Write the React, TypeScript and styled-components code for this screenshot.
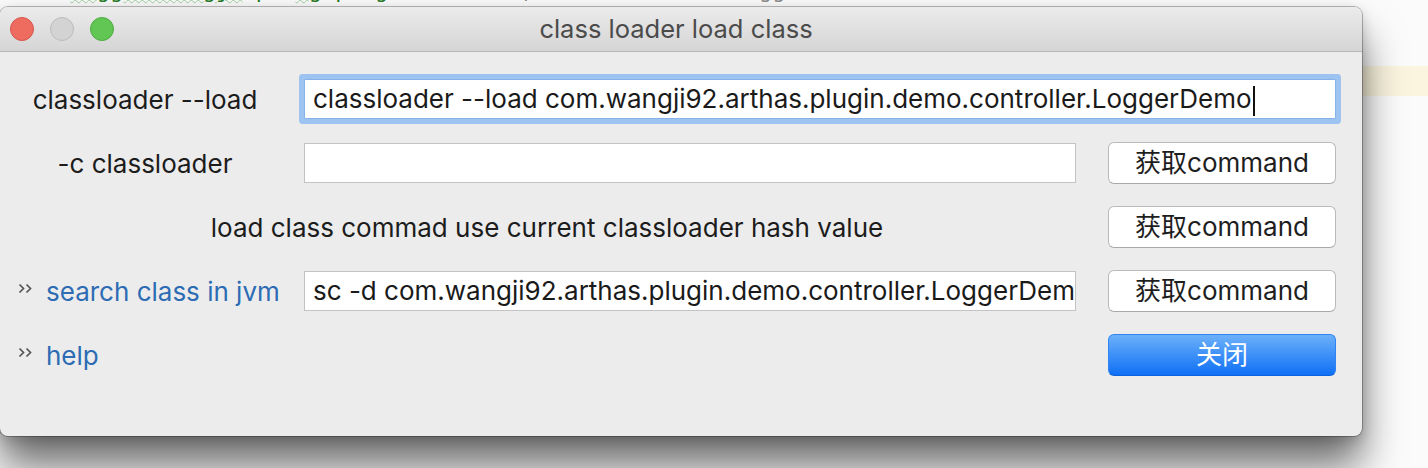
import React from 'react'
import styled, { createGlobalStyle, css } from 'styled-components'

const GlobalStyle = createGlobalStyle`
  html, body {
    margin: 0;
    padding: 0;
    background: #ffffff;
  }

  body {
    font-family: Inter, "Noto Sans CJK SC", sans-serif;
    -webkit-font-smoothing: antialiased;
  }
`

const Desktop = styled.div`
  position: relative;
  width: 1428px;
  height: 468px;
  overflow: hidden;
  background: #fbfbfb;
`

// the IDE editor that sits behind the dialog
const Editor = styled.div`
  margin-top: -24px;
  font-family: "DejaVu Sans Mono", monospace;
  font-size: 22px;
`

const CodeLine = styled.div<{ $current?: boolean }>`
  height: 30px;
  line-height: 30px;
  padding-left: 4px;
  white-space: pre;
  color: #8c8c8c;
  background: ${p => (p.$current ? '#fbf5df' : 'transparent')};
`

const Str = styled.span`
  color: #1f7a1f;
`

const Typo = styled.span`
  text-decoration: underline wavy #9fd09f;
  text-decoration-thickness: 1px;
`

const Window = styled.section`
  position: absolute;
  left: 0;
  top: 7px;
  width: 1362px;
  height: 429px;
  display: flex;
  flex-direction: column;
  overflow: hidden;
  background: #ececec;
  border-radius: 8px;
  box-shadow:
    0 0 0 1px rgba(0, 0, 0, 0.26),
    0 30px 40px rgba(0, 0, 0, 0.56),
    0 4px 14px rgba(0, 0, 0, 0.18);
`

const TitleBar = styled.header`
  height: 45px;
  box-sizing: border-box;
  display: grid;
  grid-template-columns: 1fr auto 1fr;
  align-items: center;
  background: linear-gradient(#ebebeb, #d5d5d5);
  border-bottom: 1px solid #b7b7b7;
`

const Lights = styled.div`
  display: flex;
  gap: 16px;
  padding-left: 10px;
`

const Light = styled.span<{ $fill: string; $edge: string }>`
  width: 24px;
  height: 24px;
  box-sizing: border-box;
  border-radius: 50%;
  background: ${p => p.$fill};
  border: 1px solid ${p => p.$edge};
`

const Title = styled.h1`
  margin: 0 10px 2px 0;
  font-size: 25.5px;
  font-weight: 400;
  color: #4b4b4b;
`

const Form = styled.div`
  display: grid;
  grid-template-columns: 270px 24px 772px 32px 228px;
  grid-auto-rows: 42px;
  row-gap: 22px;
  align-items: center;
  padding: 26px 26px 0 10px;
  font-size: 26px;
  color: #1c1c1c;
`

const FieldLabel = styled.label<{ $wide?: boolean }>`
  grid-column: ${p => (p.$wide ? '1 / 4' : '1')};
  padding-left: ${p => (p.$wide ? '8px' : '0')};
  text-align: center;
  white-space: nowrap;
`

const LinkLabel = styled.a`
  grid-column: 1;
  display: flex;
  align-items: center;
  gap: 13px;
  padding-left: 8px;
  color: #2d6cb4;
  text-decoration: none;
  white-space: nowrap;
`

const Chevrons = styled.svg`
  flex: none;
  margin-bottom: 5px;
`

const TextBox = styled.div<{ $wide?: boolean; $focused?: boolean }>`
  grid-column: ${p => (p.$wide ? '3 / 6' : '3')};
  height: 40px;
  box-sizing: border-box;
  padding: 0 8px;
  line-height: 37px;
  background: #ffffff;
  border: 1px solid #c3c3c3;
  white-space: nowrap;
  overflow: hidden;
  color: #1a1a1a;

  ${p =>
    p.$focused &&
    css`
      border-color: #86b2e8;
      border-radius: 1px;
      box-shadow: 0 0 0 5px #9dc4f1;
      overflow: visible;
    `}
`

const Caret = styled.span`
  display: inline-block;
  width: 2px;
  height: 30px;
  margin-left: 1px;
  vertical-align: middle;
  background: #111111;
`

const PushButton = styled.button<{ $primary?: boolean }>`
  grid-column: 5;
  height: 42px;
  padding: 0 0 1px;
  box-sizing: border-box;
  font-family: inherit;
  font-size: 26px;
  line-height: 1;
  color: #1e1e1e;
  background: #ffffff;
  border: 1px solid #bababa;
  border-bottom-color: #a9a9a9;
  border-radius: 6px;

  ${p =>
    p.$primary &&
    css`
      color: #ffffff;
      background: linear-gradient(#6cb0fa, #0f70f5);
      border-color: #2f83f2;
      border-bottom-color: #0c62dc;
    `}
`

const ChevronIcon = () => (
  <Chevrons width="15" height="11" viewBox="0 0 15 11">
    <path
      d="M1.5 1.5 L5.5 5.5 L1.5 9.5 M8.5 1.5 L12.5 5.5 L8.5 9.5"
      fill="none"
      stroke="#555555"
      strokeWidth="1.7"
    />
  </Chevrons>
)

export default function App() {
  return (
    <>
      <GlobalStyle />
      <Desktop>
        <Editor>
          <CodeLine>
            {'    '}
            <Str>
              "<Typo>lo</Typo>gg<Typo>er wangji</Typo> p l<Typo>u</Typo>g plugin"
            </Str>
            {' + name; // demo . . . loggerDemo . . . . .'}
          </CodeLine>
          <CodeLine />
          <CodeLine />
          <CodeLine $current />
        </Editor>

        <Window>
          <TitleBar>
            <Lights>
              <Light $fill="#ee6b60" $edge="#d5564b" />
              <Light $fill="#d3d3d3" $edge="#bcbcbc" />
              <Light $fill="#62c655" $edge="#4fab42" />
            </Lights>
            <Title>class loader load class</Title>
            <span />
          </TitleBar>

          <Form>
            <FieldLabel>classloader --load</FieldLabel>
            <TextBox $wide $focused>
              classloader --load com.wangji92.arthas.plugin.demo.controller.LoggerDemo
              <Caret />
            </TextBox>

            <FieldLabel>-c classloader</FieldLabel>
            <TextBox />
            <PushButton>获取command</PushButton>

            <FieldLabel $wide>load class commad use current classloader hash value</FieldLabel>
            <PushButton>获取command</PushButton>

            <LinkLabel href="#">
              <ChevronIcon />
              search class in jvm
            </LinkLabel>
            <TextBox>sc -d com.wangji92.arthas.plugin.demo.controller.LoggerDemo</TextBox>
            <PushButton>获取command</PushButton>

            <LinkLabel href="#">
              <ChevronIcon />
              help
            </LinkLabel>
            <PushButton $primary>关闭</PushButton>
          </Form>
        </Window>
      </Desktop>
    </>
  )
}
